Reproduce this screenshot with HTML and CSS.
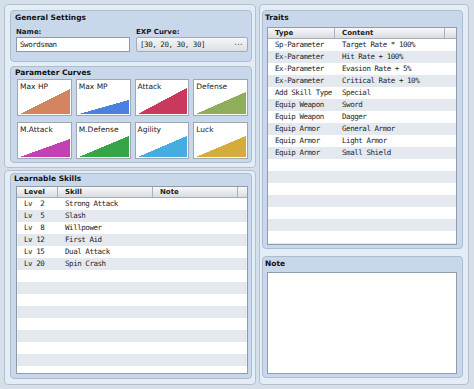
FILE: index.html
```html
<!DOCTYPE html>
<html>
<head>
<meta charset="utf-8">
<link rel="stylesheet" href="styles.css">
</head>
<body>
<div class="left">
  <div class="frame frame-top">
    <section class="group gs">
      <div class="title">General Settings</div>
      <div class="fields">
        <div class="field">
          <div class="label">Name:</div>
          <div class="input mono">Swordsman</div>
        </div>
        <div class="field">
          <div class="label">EXP Curve:</div>
          <div class="button mono"><span>[30, 20, 30, 30]</span><span class="dots">···</span></div>
        </div>
      </div>
    </section>
    <section class="group pc">
      <div class="title">Parameter Curves</div>
      <div class="curves">
        <div class="curve c-hp" style="--h:25px">Max HP</div>
        <div class="curve c-mp" style="--h:14px">Max MP</div>
        <div class="curve c-atk" style="--h:26px">Attack</div>
        <div class="curve c-def" style="--h:22px">Defense</div>
        <div class="curve c-mat" style="--h:18px">M.Attack</div>
        <div class="curve c-mdf" style="--h:21px">M.Defense</div>
        <div class="curve c-agi" style="--h:21px">Agility</div>
        <div class="curve c-luk" style="--h:21px">Luck</div>
      </div>
    </section>
  </div>
  <div class="frame frame-bottom">
    <section class="group skills">
      <div class="title">Learnable Skills</div>
      <div class="table skills-table">
        <div class="thead">
          <div class="th">Level</div><div class="th">Skill</div><div class="th">Note</div><div class="th"></div>
        </div>
        <div class="tbody mono">
          <div class="tr"><div class="td pre">Lv  2</div><div class="td">Strong Attack</div><div class="td"></div></div>
          <div class="tr"><div class="td pre">Lv  5</div><div class="td">Slash</div><div class="td"></div></div>
          <div class="tr"><div class="td pre">Lv  8</div><div class="td">Willpower</div><div class="td"></div></div>
          <div class="tr"><div class="td pre">Lv 12</div><div class="td">First Aid</div><div class="td"></div></div>
          <div class="tr"><div class="td pre">Lv 15</div><div class="td">Dual Attack</div><div class="td"></div></div>
          <div class="tr"><div class="td pre">Lv 20</div><div class="td">Spin Crash</div><div class="td"></div></div>
        </div>
      </div>
    </section>
  </div>
</div>
<div class="frame right">
  <section class="group traits">
    <div class="title">Traits</div>
    <div class="table traits-table">
      <div class="thead">
        <div class="th">Type</div><div class="th">Content</div><div class="th"></div>
      </div>
      <div class="tbody mono">
        <div class="tr"><div class="td">Sp-Parameter</div><div class="td">Target Rate * 100%</div></div>
        <div class="tr"><div class="td">Ex-Parameter</div><div class="td">Hit Rate + 100%</div></div>
        <div class="tr"><div class="td">Ex-Parameter</div><div class="td">Evasion Rate + 5%</div></div>
        <div class="tr"><div class="td">Ex-Parameter</div><div class="td">Critical Rate + 10%</div></div>
        <div class="tr"><div class="td">Add Skill Type</div><div class="td">Special</div></div>
        <div class="tr"><div class="td">Equip Weapon</div><div class="td">Sword</div></div>
        <div class="tr"><div class="td">Equip Weapon</div><div class="td">Dagger</div></div>
        <div class="tr"><div class="td">Equip Armor</div><div class="td">General Armor</div></div>
        <div class="tr"><div class="td">Equip Armor</div><div class="td">Light Armor</div></div>
        <div class="tr"><div class="td">Equip Armor</div><div class="td">Small Shield</div></div>
      </div>
    </div>
  </section>
  <section class="group note">
    <div class="title">Note</div>
    <div class="textarea"></div>
  </section>
</div>
</body>
</html>
```
FILE: styles.css
```css
* { box-sizing: border-box; }
html, body { margin: 0; }
body {
  width: 474px;
  height: 389px;
  padding: 4px 5px 4px 4px;
  display: flex;
  gap: 3px;
  background: #d5dfea;
  font-family: "DejaVu Sans", sans-serif;
  font-size: 7px;
  color: #1a1a1a;
  overflow: hidden;
}
.mono {
  font-family: "DejaVu Sans Mono", monospace;
  font-size: 7.5px;
  letter-spacing: -0.45px;
}
.left {
  width: 252px;
  display: flex;
  flex-direction: column;
  gap: 2px;
}
.frame {
  background: #e4ecf5;
  border: 1px solid #b2c1d2;
  border-radius: 4px;
}
.frame-top {
  height: 164px;
  padding: 5px 3px 4px 5px;
  display: flex;
  flex-direction: column;
  gap: 4px;
}
.frame-bottom {
  flex: 1;
  padding: 2px 3px 5px 5px;
  display: flex;
}
.right {
  width: 210px;
  padding: 5px 5px 6px 2px;
  display: flex;
  flex-direction: column;
  gap: 7px;
}
.group {
  background: #c8d7e9;
  border: 1px solid #abbdd2;
  border-radius: 4px;
  display: flex;
  flex-direction: column;
}
.title {
  font-weight: bold;
  font-size: 7.5px;
  line-height: 10px;
  height: 10px;
  color: #111;
}
.gs {
  height: 52px;
  padding: 2px 3px 0 4px;
}
.fields {
  margin: 4px 0 0 1px;
  display: grid;
  grid-template-columns: 114px 112px;
  column-gap: 6px;
}
.label {
  font-weight: bold;
  line-height: 10px;
  height: 10px;
  color: #1a1a1a;
}
.input {
  height: 15px;
  border: 1px solid #8e9aaa;
  background: #fff;
  padding-left: 3px;
  line-height: 13px;
  color: #1a1a1a;
}
.button {
  height: 15px;
  border: 1px solid #a3abb6;
  border-radius: 2px;
  background: linear-gradient(#f5f6f8, #dcdfe4);
  padding: 0 5px 0 3px;
  line-height: 13px;
  display: flex;
  justify-content: space-between;
  color: #2a2a2a;
}
.dots { color: #555; letter-spacing: -1.6px; }
.pc {
  flex: 1;
  padding: 1px 3px 0 4px;
}
.curves {
  margin: 1px 0 0 2px;
  width: 231px;
  display: grid;
  grid-template-columns: repeat(4, 1fr);
  grid-template-rows: 37px 37px;
  column-gap: 4px;
  row-gap: 6px;
}
.curve {
  border: 1px solid #9ea8b3;
  padding: 2px 2px;
  font-size: 7.5px;
  line-height: 10px;
  color: #1a1a1a;
  background:
    linear-gradient(to top left, var(--c) 50%, transparent 50.5%) right 1px bottom 1px / calc(100% - 3px) var(--h) no-repeat,
    #fff;
}
.c-hp { --c: #d4845f; }
.c-mp { --c: #4a80e0; }
.c-atk { --c: #c9395e; }
.c-def { --c: #8fae5c; }
.c-mat { --c: #c342b3; }
.c-mdf { --c: #37a447; }
.c-agi { --c: #45addf; }
.c-luk { --c: #d5ab3c; }
.skills {
  flex: 1;
  padding: 0 3px 4px 3px;
}
.table {
  flex: 1;
  border: 1px solid #8f9cab;
  background: #fff;
  display: flex;
  flex-direction: column;
  overflow: hidden;
}
.skills-table { margin: 2px 0 0 2px; }
.thead {
  height: 11px;
  display: grid;
  background: linear-gradient(#f8f8f8, #d9dce0);
  border-bottom: 1px solid #a5adb7;
}
.th {
  border-right: 1px solid #aab2bc;
  padding-left: 7px;
  font-weight: bold;
  line-height: 10px;
  color: #222;
}
.th:last-child { border-right: 0; }
.tbody {
  flex: 1;
  background: repeating-linear-gradient(#fff 0 12px, #e4e9f0 12px 24px);
  color: #1e1e1e;
}
.tr {
  height: 12px;
  line-height: 12px;
  display: grid;
}
.td {
  padding-left: 7px;
  white-space: nowrap;
  overflow: hidden;
}
.pre { white-space: pre; }
.skills-table .thead, .skills-table .tr { grid-template-columns: 41px 95px 85px 1fr; }
.traits-table .thead, .traits-table .tr { grid-template-columns: 67px 110px 1fr; }
.traits {
  height: 239px;
  padding: 2px 5px 3px 2px;
}
.traits-table { margin: 4px 0 0 2px; }
.note {
  flex: 1;
  padding: 2px 5px 3px 2px;
}
.textarea {
  flex: 1;
  margin: 3px 0 0 2px;
  background: #fff;
  border: 1px solid #8f9cab;
}
```
